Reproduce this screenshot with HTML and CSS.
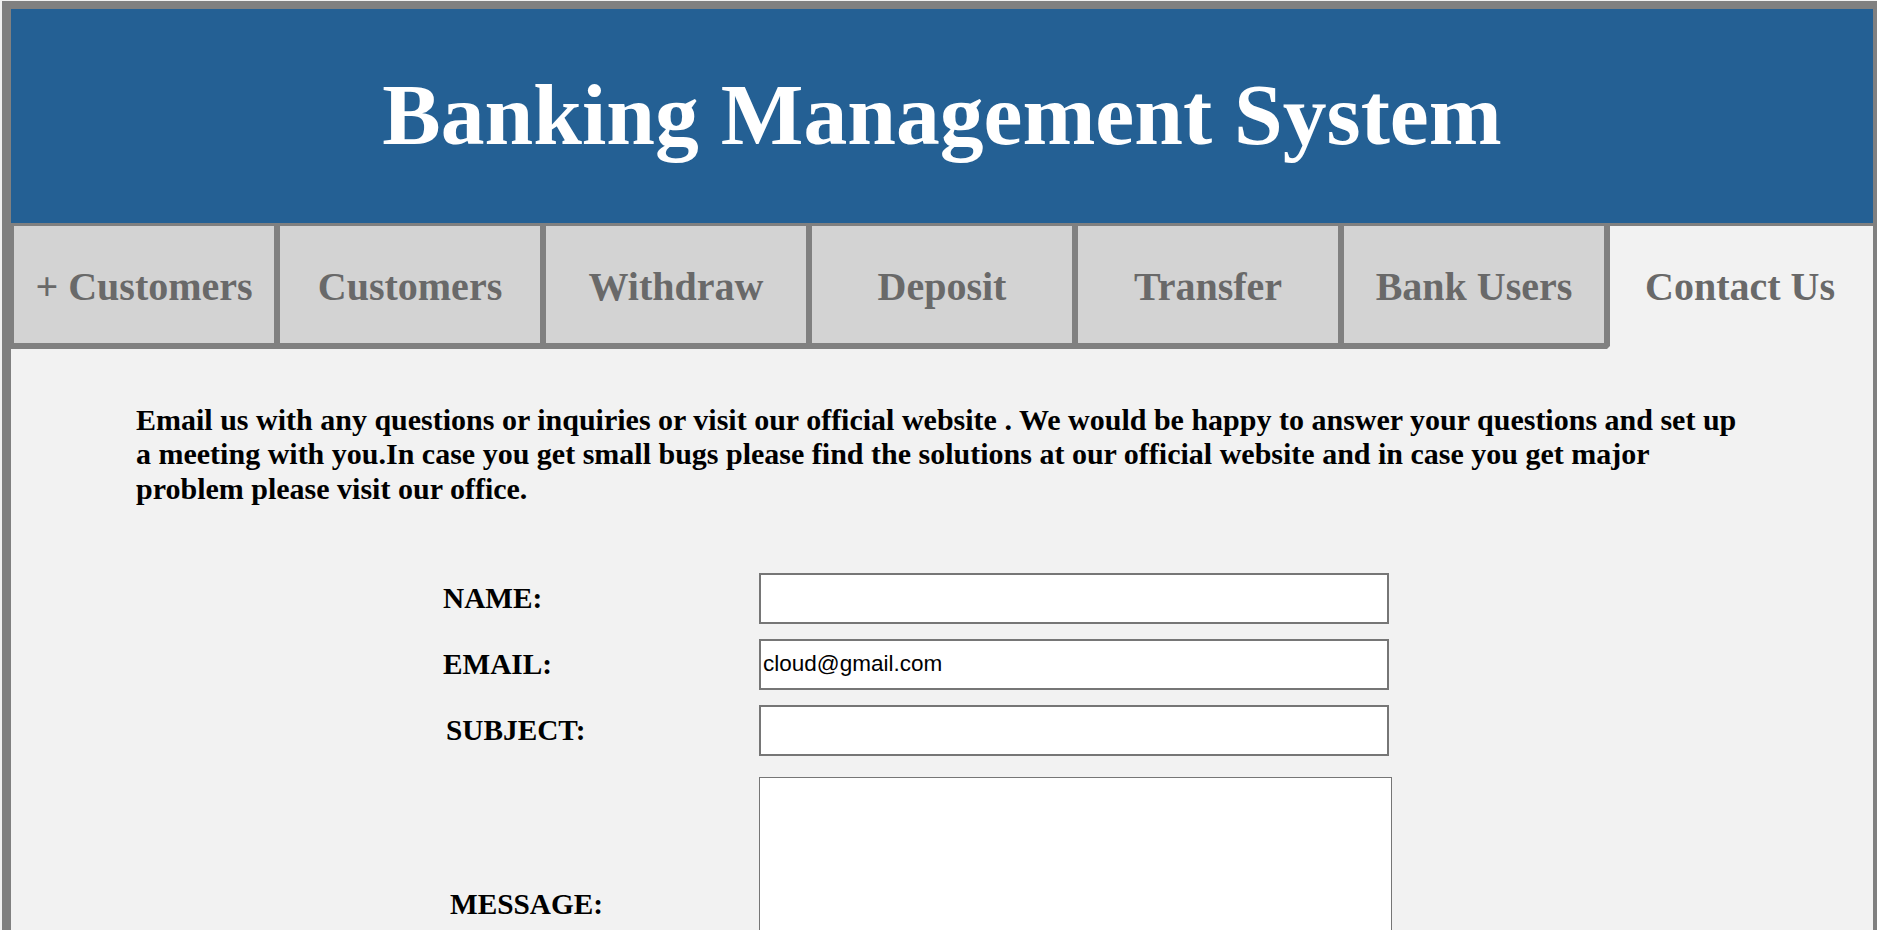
FILE: index.html
```html
<!DOCTYPE html>
<html lang="en">
<head>
<meta charset="utf-8">
<title>Banking Management System</title>
<link rel="stylesheet" href="styles.css">
</head>
<body>
<div class="page">
  <header class="header">
    <h1 class="title">Banking Management System</h1>
  </header>
  <nav class="tabs">
    <a class="tab">+ Customers</a>
    <a class="tab">Customers</a>
    <a class="tab">Withdraw</a>
    <a class="tab">Deposit</a>
    <a class="tab">Transfer</a>
    <a class="tab">Bank Users</a>
    <a class="tab active">Contact Us</a>
  </nav>
  <main class="content">
    <p class="intro">Email us with any questions or inquiries or visit our official website . We would be happy to answer your questions and set up a meeting with you.In case you get small bugs please find the solutions at our official website and in case you get major problem please visit our office.</p>
    <form class="form">
      <label class="label">NAME:</label>
      <input class="field" type="text">
      <label class="label">EMAIL:</label>
      <input class="field" type="text" value="cloud@gmail.com">
      <label class="label label-subject">SUBJECT:</label>
      <input class="field" type="text">
      <label class="label label-message">MESSAGE:</label>
      <textarea class="message"></textarea>
    </form>
  </main>
</div>
</body>
</html>
```

FILE: styles.css
```css
html, body {
  margin: 0;
  overflow: hidden;
}
body {
  padding: 1px 0 0 2px;
  background: #f2f2f2;
  font-family: "Liberation Serif", "Times New Roman", serif;
}
.page {
  width: 1862px;
  border: 9px solid #808080;
  border-top-width: 8px;
  background: #f2f2f2;
  min-height: 1200px;
}
.header {
  height: 214px;
  background: #246094;
  display: flex;
  align-items: center;
  justify-content: center;
}
.title {
  margin: -3px 0 0 0;
  color: #ffffff;
  font-size: 87.6px;
  font-weight: bold;
  line-height: normal;
}
.tabs {
  display: flex;
  align-items: flex-start;
  border-top: 3px solid #808080;
  border-bottom: 3px solid #808080;
}
.tab {
  flex: 1 1 0;
  box-sizing: border-box;
  height: 120px;
  border: 3px solid #808080;
  border-top: none;
  background: #d3d3d3;
  color: #696969;
  font-size: 40px;
  font-weight: bold;
  display: flex;
  align-items: center;
  justify-content: center;
  padding-top: 3px;
}
.tab.active {
  position: relative;
  height: 123px;
  margin-bottom: -3px;
  background: #f2f2f2;
  border-right-color: #f2f2f2;
  border-bottom-color: #f2f2f2;
  padding-top: 0;
}
.content {
  padding: 54px 125px 0 125px;
}
.intro {
  margin: 0;
  font-size: 30px;
  font-weight: bold;
  line-height: 34.3px;
  color: #000;
}
.form {
  margin: 67px 0 0 307px;
  display: grid;
  grid-template-columns: 316px auto;
  row-gap: 15px;
  align-items: center;
  justify-items: start;
}
.label {
  font-size: 29.3px;
  font-weight: bold;
  color: #000;
}
.label-subject {
  padding-left: 3px;
}
.label-message {
  padding-left: 7px;
  margin-top: 6px;
}
.field {
  box-sizing: border-box;
  width: 630px;
  height: 51px;
  margin: 0;
  border: 2px solid #767676;
  padding: 0 2px;
  background: #fff;
  font-family: "Liberation Sans", Arial, sans-serif;
  font-size: 22.5px;
  color: #000;
}
.message {
  box-sizing: border-box;
  width: 633px;
  height: 256px;
  margin: 6px 0 0 0;
  border: 1px solid #767676;
  background: #fff;
  resize: none;
}
```
